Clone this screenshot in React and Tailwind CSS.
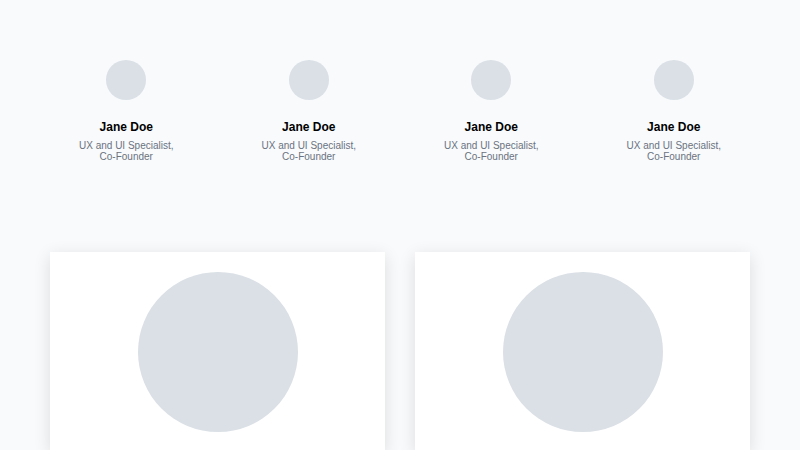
export default function App() {
  const members = [0, 1, 2, 3];
  return (
    <div className="h-[450px] w-[800px] overflow-hidden bg-[#f8fafc]" style={{ fontFamily: '"Liberation Sans", Arial, sans-serif' }}>
      <div className="grid grid-cols-4 px-[35px] pt-[60px]">
        {members.map((i) => (
          <div key={i} className="flex flex-col items-center text-center">
            <div className="h-10 w-10 rounded-full bg-[#dae0e6]" />
            <div className="mt-[19px] text-[12px] font-bold leading-[16px] text-black">Jane Doe</div>
            <div className="mt-[5px] text-[10px] leading-[11px] text-[#6b7280]">
              UX and UI Specialist,
              <br />
              Co-Founder
            </div>
          </div>
        ))}
      </div>
      <div className="mx-[50px] mt-[90px] grid grid-cols-2 gap-[30px]">
        {[0, 1].map((i) => (
          <div key={i} className="flex h-[198px] justify-center bg-white pt-[20px] shadow-[0_4px_16px_rgba(0,0,0,0.12)]">
            <div className="h-[160px] w-[160px] rounded-full bg-[#dae0e6]" />
          </div>
        ))}
      </div>
    </div>
  );
}
